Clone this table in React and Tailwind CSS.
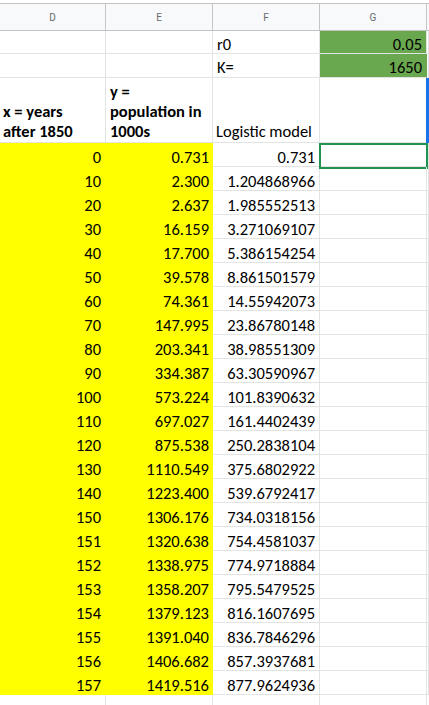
import React from "react";

const xs = [0, 10, 20, 30, 40, 50, 60, 70, 80, 90, 100, 110, 120, 130, 140, 150, 151, 152, 153, 154, 155, 156, 157];
const ys = ["0.731", "2.300", "2.637", "16.159", "17.700", "39.578", "74.361", "147.995", "203.341", "334.387", "573.224", "697.027", "875.538", "1110.549", "1223.400", "1306.176", "1320.638", "1338.975", "1358.207", "1379.123", "1391.040", "1406.682", "1419.516"];
const ls = ["0.731", "1.204868966", "1.985552513", "3.271069107", "5.386154254", "8.861501579", "14.55942073", "23.86780148", "38.98551309", "63.30590967", "101.8390632", "161.4402439", "250.2838104", "375.6802922", "539.6792417", "734.0318156", "754.4581037", "774.9718884", "795.5479525", "816.1607695", "836.7846296", "857.3937681", "877.9624936"];

const font = { fontFamily: "Carlito, 'Open Sans', sans-serif" };

function Cell({ w, extra = "", children }) {
  return (
    <div className={`${w} shrink-0 border-r border-b border-[#e2e3e3] flex items-end leading-[18px] text-[16.5px] text-black overflow-hidden whitespace-nowrap ${extra}`}>
      {children}
    </div>
  );
}

export default function App() {
  return (
    <div className="w-[429px] h-[705px] overflow-hidden bg-white" style={font}>
      <div className="h-[3px]" />
      {/* Column header */}
      <div className="flex h-[28px] border-t border-b border-[#c4c4c4] bg-[#f8f9fa]">
        {[
          ["w-[106px]", "D"],
          ["w-[107px]", "E"],
          ["w-[107px]", "F"],
          ["w-[107px]", "G"],
        ].map(([w, l]) => (
          <div key={l} className={`${w} shrink-0 border-r border-[#c4c4c4] flex items-center justify-center text-[10px] text-[#666a6e]`} style={{ fontFamily: "Roboto, Arial, sans-serif" }}>
            {l}
          </div>
        ))}
        <div className="flex-1" />
      </div>
      {/* Row 1 */}
      <div className="flex h-[23px]">
        <Cell w="w-[106px]" />
        <Cell w="w-[107px]" />
        <Cell w="w-[107px]" extra="pl-[4px]">r0</Cell>
        <Cell w="w-[107px]" extra="justify-end pr-[4px] bg-[#6aa84f] border-[#6aa84f]">0.05</Cell>
        <Cell w="flex-1" />
      </div>
      {/* Row 2 */}
      <div className="flex h-[24px]">
        <Cell w="w-[106px]" />
        <Cell w="w-[107px]" />
        <Cell w="w-[107px]" extra="pl-[4px] pb-[1px]">K=</Cell>
        <Cell w="w-[107px]" extra="justify-end pr-[4px] pb-[1px] bg-[#6aa84f] border-r-[#6aa84f]">1650</Cell>
        <Cell w="flex-1" />
      </div>
      {/* Row 3 */}
      <div className="flex h-[65px]">
        <Cell w="w-[106px]" extra="pl-[3px] pb-[1px] font-bold whitespace-normal">
          <div className="leading-[20px]">x = years<br />after 1850</div>
        </Cell>
        <Cell w="w-[107px]" extra="pl-[4px] pb-[1px] font-bold whitespace-normal">
          <div className="leading-[20px]">y =<br />population in<br />1000s</div>
        </Cell>
        <Cell w="w-[107px]" extra="pl-[3px] pb-[2px]">Logistic model</Cell>
        <div className="w-[107px] shrink-0 border-r border-b border-[#e2e3e3] relative">
          <div className="absolute right-[-3px] top-0 bottom-[-1px] w-[3px] bg-[#1a73e8]" />
        </div>
        <Cell w="flex-1" />
      </div>
      {/* Data rows */}
      {xs.map((x, i) => (
        <div key={i} className="flex h-[24px]">
          <Cell w="w-[106px]" extra="justify-end pr-[4px] bg-[#ffff00] border-[#ffff00]">{x}</Cell>
          <Cell w="w-[107px]" extra="justify-end pr-[3px] bg-[#ffff00] border-[#ffff00]">{ys[i]}</Cell>
          <Cell w="w-[107px]" extra="justify-end pr-[4px]">{ls[i]}</Cell>
          <div className="w-[107px] shrink-0 border-r border-b border-[#e2e3e3] relative">
            {i === 0 && (
              <div className="absolute left-[-1px] top-0 right-[-2px] bottom-[-3px] border-2 border-[#1e9450]" />
            )}
          </div>
          <Cell w="flex-1" />
        </div>
      ))}
      <div className="flex h-[20px]">
        <div className="w-[106px] shrink-0 border-r border-[#e2e3e3]" />
        <div className="w-[107px] shrink-0 border-r border-[#e2e3e3]" />
        <div className="w-[107px] shrink-0 border-r border-[#e2e3e3]" />
        <div className="w-[107px] shrink-0 border-r border-[#e2e3e3]" />
        <div className="flex-1" />
      </div>
    </div>
  );
}
